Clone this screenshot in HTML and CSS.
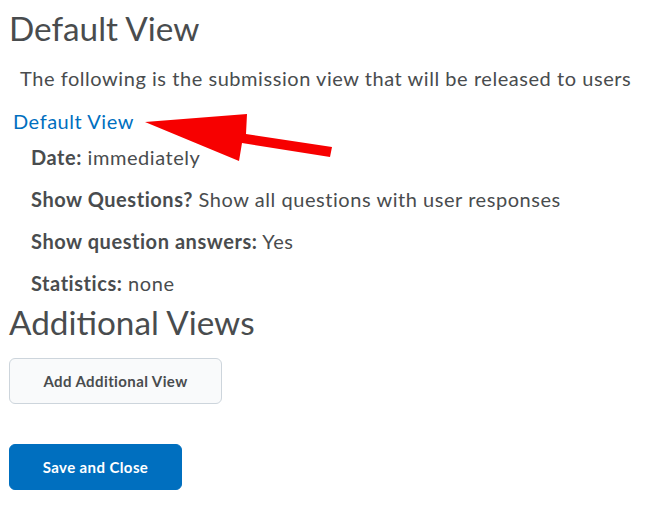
FILE: index.html
```html
<!DOCTYPE html>
<html lang="en">
<head>
    <meta charset="UTF-8">
    <title>Submission Views</title>
    <link rel="stylesheet" href="styles.css">
</head>
<body>
    <div class="page">
        <h1>Default View</h1>
        <p class="intro">The following is the submission view that will be released to users</p>

        <div class="view">
            <a class="view-link" href="#">Default View</a>
            <ul class="view-details">
                <li><b>Date:</b> immediately</li>
                <li><b>Show Questions?</b> Show all questions with user responses</li>
                <li><b>Show question answers:</b> Yes</li>
                <li><b>Statistics:</b> none</li>
            </ul>
        </div>

        <h1 class="second">Additional Views</h1>
        <button class="btn" type="button">Add Additional View</button>

        <div class="actions">
            <button class="btn primary" type="button">Save and Close</button>
        </div>
    </div>

    <!-- annotation arrow drawn over the screenshot -->
    <svg class="arrow" width="655" height="510" viewBox="0 0 655 510">
        <polygon points="145,122 247,114 246,134 332,147 330,157 242,143 239,161" fill="#f70000"/>
    </svg>
</body>
</html>
```

FILE: styles.css
```css
body {
    margin: 0;
    font-family: Lato, "Open Sans", sans-serif;
    color: #494c4e;
    background: #ffffff;
}
.page {
    padding: 6px 10px 0 9px;
}
h1 {
    font-size: 33.3px;
    font-weight: 400;
    line-height: 44px;
    margin: 0;
}
.intro {
    font-size: 20px;
    letter-spacing: 0.55px;
    line-height: 30px;
    margin: 13px 0 0 11px;
}
.view {
    margin-top: 13px;
    letter-spacing: 0.55px;
}
.view-link {
    display: block;
    color: #006fbf;
    text-decoration: none;
    font-size: 20px;
    line-height: 30px;
    margin-left: 4px;
}
.view-details {
    list-style: none;
    margin: 0;
    padding: 0 0 0 22px;
    font-size: 20px;
}
.view-details li {
    line-height: 42px;
}
.view-details b {
    font-weight: 700;
}
.second {
    margin-top: -4px;
}
.btn {
    font-family: Lato, "Open Sans", sans-serif;
    font-size: 15px;
    font-weight: 700;
    letter-spacing: 0.4px;
    color: #494c4e;
    background: #f9fafb;
    border: 1px solid #cdd5dc;
    border-radius: 6px;
    height: 46px;
    width: 213px;
    margin-top: 14px;
    cursor: pointer;
}
.actions {
    margin-top: 40px;
}
.btn.primary {
    width: 173px;
    margin-top: 0;
    color: #ffffff;
    background: #006fbf;
    border-color: #006fbf;
}
.arrow {
    position: absolute;
    top: 0;
    left: 0;
    pointer-events: none;
}
```
